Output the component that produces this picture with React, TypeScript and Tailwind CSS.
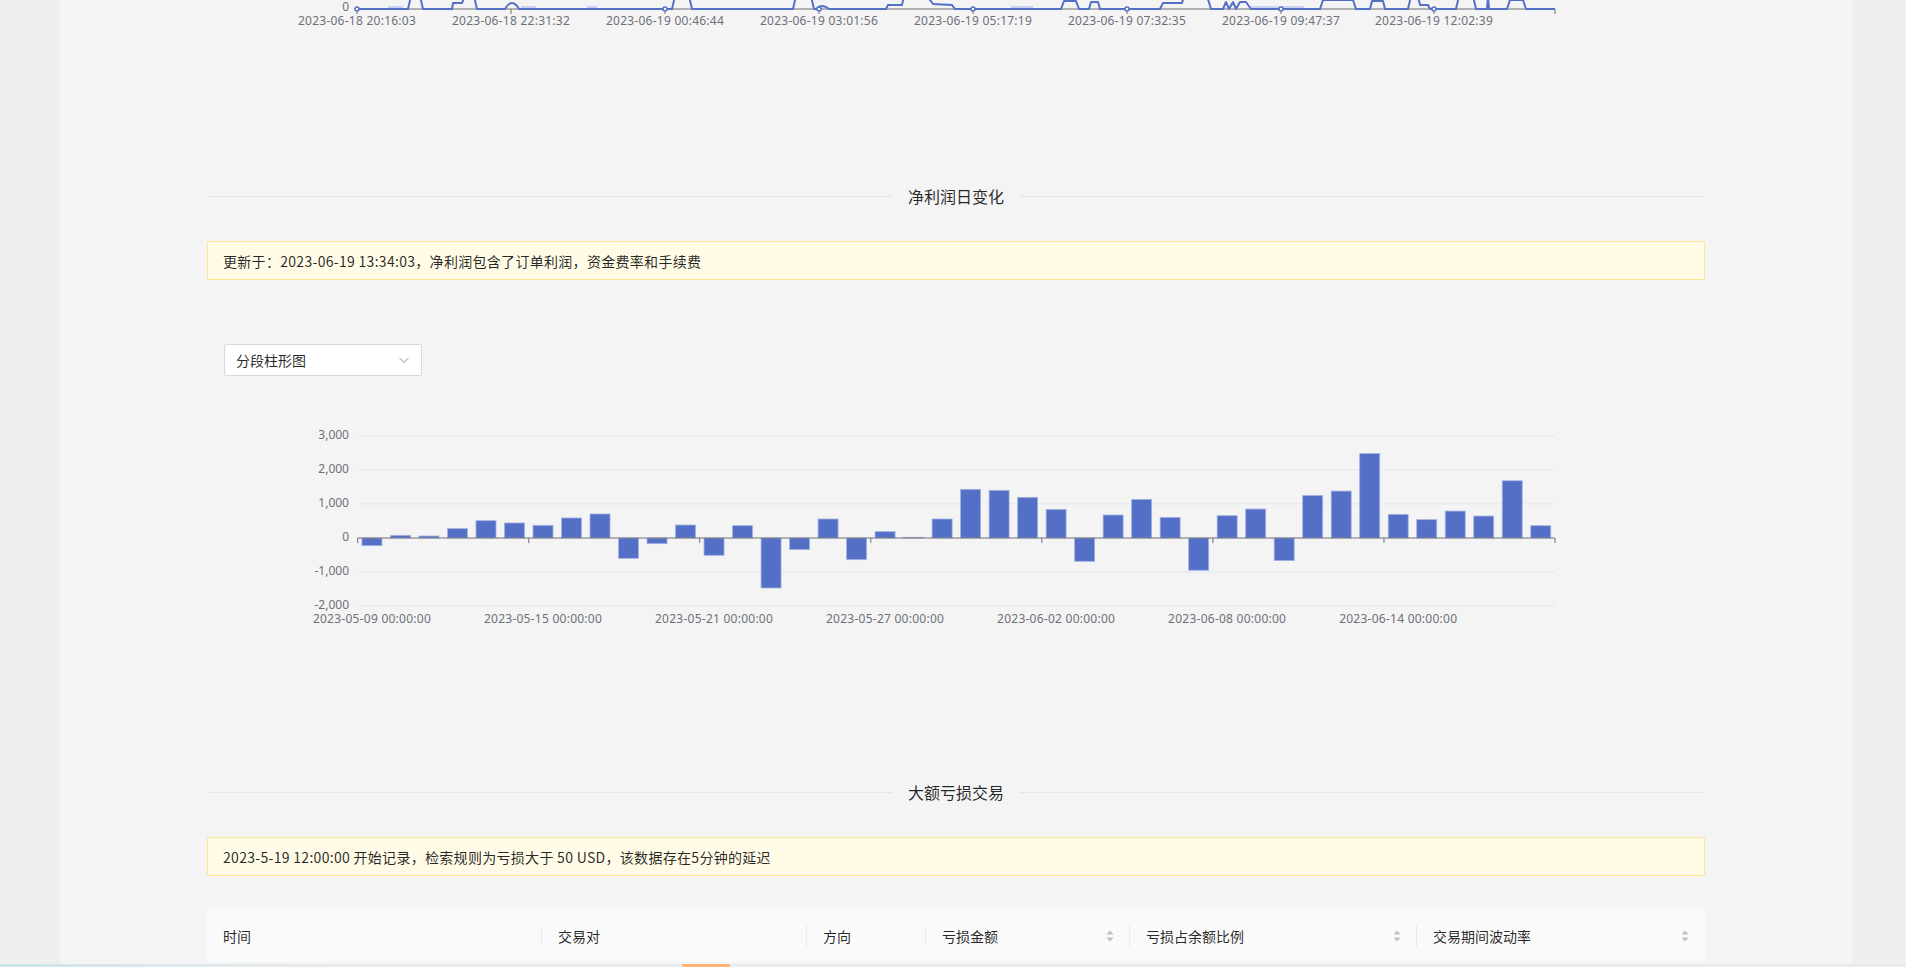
import React from "react"

const AXIS = "#6e7079"
const GRID = "#e0e6f1"
const BLUE = "#5470c6"
const LABEL_FONT = '"Noto Sans", "Liberation Sans", sans-serif'

// top line chart (only its x axis is still on screen)
const topLabels = [
  "2023-06-18 20:16:03",
  "2023-06-18 22:31:32",
  "2023-06-19 00:46:44",
  "2023-06-19 03:01:56",
  "2023-06-19 05:17:19",
  "2023-06-19 07:32:35",
  "2023-06-19 09:47:37",
  "2023-06-19 12:02:39",
]
const topTicks = [357, 511, 665, 819, 973, 1127, 1281, 1434]
const topLine =
  "M357 9 L408 9 L411 -4 L420 -4 L423 9 L452 9 L453 3 L462 3 L465 -4 L474 -4 L477 9 " +
  "L505 9 Q512 -3 519 9 L672 9 L675 -4 L689 -4 L692 9 L793 9 L796 -4 L811 -4 L814 9 " +
  "L816 9 Q822 3 829 9 L886 9 L888 5 L902 5 L904 -4 L927 -4 L933 4 L952 5 L955 9 " +
  "L1061 9 L1064 1 L1076 1 L1079 9 L1089 9 L1091 2 L1098 2 L1100 9 L1160 9 L1163 3 L1182 3 L1184 -4 " +
  "L1207 -4 L1211 9 L1223 9 L1226 2 L1229 9 L1233 2 L1236 9 L1240 2 L1246 2 L1251 9 " +
  "L1320 9 L1323 0 L1353 0 L1356 9 L1370 9 L1372 1 L1383 1 L1385 9 L1408 9 L1411 -4 L1418 -4 L1420 5 L1428 5 L1430 9 " +
  "L1456 9 L1459 -4 L1473 -4 L1476 9 L1487 9 L1488 -4 L1489 9 L1507 9 L1510 0 L1523 0 L1526 9 L1555 9"
const faint = [
  [388, 403],
  [521, 536],
  [587, 597],
  [1011, 1033],
  [1251, 1304],
]

function TopChart() {
  return (
    <svg width={1498} height={32} viewBox="207 0 1498 32" className="block">
      <line x1={357} y1={9} x2={1555} y2={9} stroke={AXIS} strokeWidth={1} />
      {[...topTicks, 1555].map((x) => (
        <line key={x} x1={x} y1={9} x2={x} y2={14} stroke={AXIS} strokeWidth={1} />
      ))}
      {faint.map(([a, b]) => (
        <line key={a} x1={a} y1={7} x2={b} y2={7} stroke="#c9d2ee" strokeWidth={2} />
      ))}
      <path d={topLine} fill="none" stroke={BLUE} strokeWidth={2} strokeLinejoin="round" />
      {[357, 665, 819, 973, 1127, 1281, 1434].map((x) => (
        <circle key={x} cx={x} cy={9} r={2} fill="#fff" stroke={BLUE} strokeWidth={1.5} />
      ))}
      <text x={349} y={8} textAnchor="end" dominantBaseline="middle" fontSize={12} fill={AXIS} fontFamily={LABEL_FONT}>
        0
      </text>
      {topLabels.map((t, i) => (
        <text
          key={t}
          x={topTicks[i]}
          y={22}
          textAnchor="middle"
          dominantBaseline="middle"
          fontSize={12}
          letterSpacing={0.25}
          fill={AXIS}
          fontFamily={LABEL_FONT}
        >
          {t}
        </text>
      ))}
    </svg>
  )
}

// daily net profit
const profits = [
  -225, 78, 59, 274, 508, 440, 372, 587, 704, -596, -166, 381, -508, 362, -1466, -340, 557, -635, 186, 20, 557,
  1427, 1398, 1192, 840, -684, 674, 1132, 605, -946, 654, 849, -663, 1249, 1376, 2478, 693, 537, 790, 644, 1678, 361,
]
const dayLabels = ["05-09", "05-15", "05-21", "05-27", "06-02", "06-08", "06-14"]

function BarChart() {
  const x0 = 357.7
  const x1 = 1555
  const cw = (x1 - x0) / profits.length
  const zero = 539
  const unit = 34.1 / 1000
  const ticks = [3000, 2000, 1000, 0, -1000, -2000]

  return (
    <svg width={1498} height={240} viewBox="207 400 1498 240" className="block">
      {ticks.map((v) => {
        const y = zero - v * unit
        return (
          <g key={v}>
            {v !== 0 && <line x1={x0} y1={y} x2={x1} y2={y} stroke={GRID} strokeWidth={1} />}
            <text x={349} y={y} textAnchor="end" dominantBaseline="middle" fontSize={12} fill={AXIS} fontFamily={LABEL_FONT}>
              {v.toLocaleString("en-US")}
            </text>
          </g>
        )
      })}
      {profits.map((v, i) => {
        const h = Math.abs(v) * unit
        const x = x0 + i * cw + (cw - 20) / 2
        const y = v >= 0 ? zero - h : zero
        return <rect key={i} x={x} y={y} width={20} height={Math.max(h, 0.5)} fill={BLUE} stroke="#a3b2e2" strokeWidth={0.8} />
      })}
      <line x1={x0} y1={zero} x2={x1} y2={zero} stroke={AXIS} strokeWidth={1} />
      {[0, 6, 12, 18, 24, 30, 36, 42].map((k) => (
        <line key={k} x1={x0 + k * cw} y1={zero} x2={x0 + k * cw} y2={zero + 5} stroke={AXIS} strokeWidth={1} />
      ))}
      {dayLabels.map((d, j) => (
        <text
          key={d}
          x={x0 + (j * 6 + 0.5) * cw}
          y={621}
          textAnchor="middle"
          dominantBaseline="middle"
          fontSize={12}
          letterSpacing={0.25}
          fill={AXIS}
          fontFamily={LABEL_FONT}
        >
          {`2023-${d} 00:00:00`}
        </text>
      ))}
    </svg>
  )
}

function Divider({ title }: { title: string }) {
  return (
    <div className="flex items-center h-6">
      <div className="flex-1 border-t border-black/[0.06]" />
      <span className="px-4 text-base font-normal text-black/85 leading-6">{title}</span>
      <div className="flex-1 border-t border-black/[0.06]" />
    </div>
  )
}

function Alert({ children }: { children: React.ReactNode }) {
  return (
    <div className="h-[39px] flex items-center px-[15px] border border-[#ffe58f] bg-[#fffbe6] rounded-[2px] text-sm tracking-[0.3px] text-black/85">
      {children}
    </div>
  )
}

function SortIcon() {
  return (
    <svg width="8" height="12" viewBox="0 0 8 12" className="shrink-0">
      <path d="M4 0.5 L7.5 4.5 L0.5 4.5Z" fill="#bfbfbf" />
      <path d="M0.5 7.5 L7.5 7.5 L4 11.5Z" fill="#bfbfbf" />
    </svg>
  )
}

const columns = [
  { title: "时间", w: "w-[335px]" },
  { title: "交易对", w: "w-[265px]" },
  { title: "方向", w: "w-[119px]" },
  { title: "亏损金额", w: "w-[204px]", sort: true },
  { title: "亏损占余额比例", w: "w-[287px]", sort: true },
  { title: "交易期间波动率", w: "w-[288px]", sort: true },
]

export default function App() {
  return (
    <div className="h-screen overflow-hidden bg-[#efefef] font-['Noto_Sans_CJK_SC','Noto_Sans',sans-serif]">
      <main className="ml-[60px] w-[1792px] h-full bg-[#f4f4f4] px-[147px]">
        <TopChart />

        <div className="mt-[152px]">
          <Divider title="净利润日变化" />
        </div>
        <div className="mt-[33px]">
          <Alert>更新于：2023-06-19 13:34:03，净利润包含了订单利润，资金费率和手续费</Alert>
        </div>

        <div className="mt-[64px] ml-[17px] w-[198px] h-8 flex items-center justify-between pl-[11px] pr-[11px] bg-white border border-[#d9d9d9] rounded-[2px]">
          <span className="text-sm text-black/85">分段柱形图</span>
          <svg width="12" height="12" viewBox="0 0 12 12">
            <polyline points="1.5,4 6,8.5 10.5,4" fill="none" stroke="#bfbfbf" strokeWidth="1.1" />
          </svg>
        </div>

        <div className="mt-[23px]">
          <BarChart />
        </div>

        <div className="mt-[141px]">
          <Divider title="大额亏损交易" />
        </div>
        <div className="mt-[33px]">
          <Alert>2023-5-19 12:00:00 开始记录，检索规则为亏损大于 50 USD，该数据存在5分钟的延迟</Alert>
        </div>

        <div className="mt-[33px] flex h-[53px] bg-[#fafafa]">
          {columns.map((c, i) => (
            <div key={c.title} className={`${c.w} relative flex items-center justify-between px-4 text-sm font-normal text-black/85`}>
              <span>{c.title}</span>
              {c.sort && <SortIcon />}
              {i < columns.length - 1 && (
                <div className="absolute right-0 top-1/2 -translate-y-1/2 w-px h-[22px] bg-black/[0.06]" />
              )}
            </div>
          ))}
        </div>
      </main>

      <div className="fixed bottom-0 left-0 right-0 h-[3px] bg-[#ebebeb]">
        <div className="absolute left-0 top-0 h-full w-[340px] bg-gradient-to-r from-[#cde4ee] to-transparent" />
        <div className="absolute left-[682px] top-0 h-full w-[48px] bg-[#ffb57a]" />
      </div>
    </div>
  )
}
